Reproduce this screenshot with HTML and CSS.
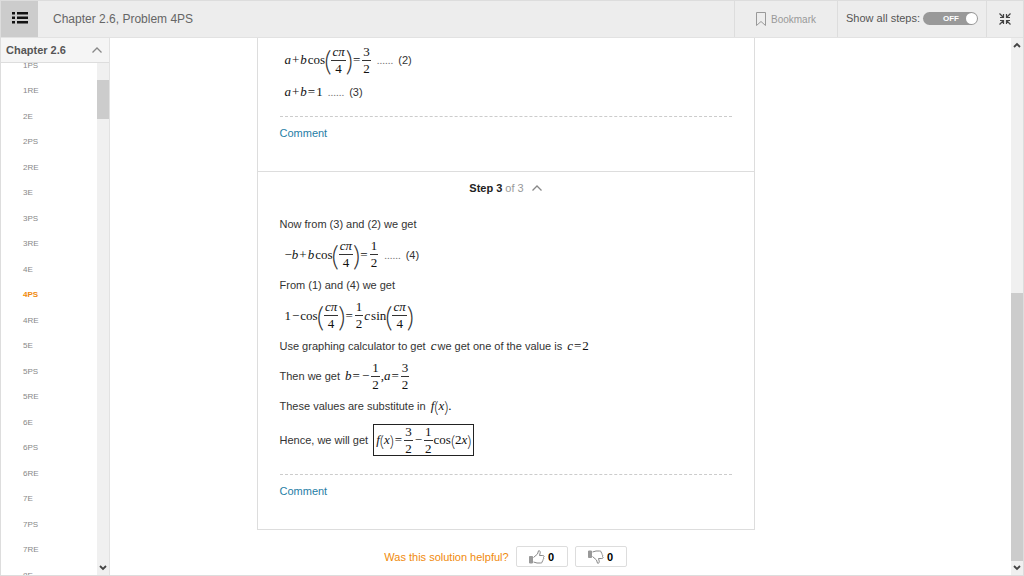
FILE: index.html
```html
<!DOCTYPE html>
<html lang="en">
<head>
    <meta charset="UTF-8">
    <meta name="viewport" content="width=device-width, initial-scale=1.0">
    <title>Chapter 2.6, Problem 4PS</title>
    <link rel="stylesheet" href="styles.css">
</head>
<body>
    <div class="page">
        <header class="topbar">
            <button type="button" class="menu-button" aria-label="Contents">
                <svg width="16" height="14" viewBox="0 0 16 14" fill="#111">
                    <path d="M0 1h3v2.500H0zM5 1h11v2.500H5zM0 5.500h3V8H0zM5 5.500h11V8H5zM0 10h3v2.500H0zM5 10h11v2.500H5z"/>
                </svg>
            </button>
            <h1 class="title">Chapter 2.6, Problem 4PS</h1>
            <button type="button" class="bookmark">
                <svg width="12" height="16" viewBox="0 0 12 16" fill="none" stroke="#999">
                    <path d="M1.500 1.500h9v13L6 10.500l-4.500 4z"/>
                </svg>
                Bookmark
            </button>
            <div class="show-steps">
                <label for="steps">Show all steps:</label>
                <span class="toggle">
                    <input type="checkbox" id="steps">
                    <span class="toggle-text">OFF</span>
                </span>
            </div>
            <button type="button" class="shrink-button" aria-label="Exit full screen">
                <svg width="12" height="12" viewBox="0 0 12 12" fill="none" stroke="#444" stroke-width="1.200">
                    <path d="M.5.5l4 4M4.500 1v3.500H1M11.500.5l-4 4M7.500 1v3.500H11M.5 11.500l4-4M4.500 11V7.500H1M11.500 11.500l-4-4M7.500 11V7.500H11"/>
                </svg>
            </button>
        </header>

        <div class="content">
            <nav class="sidebar">
                <button type="button" class="chapter">
                    Chapter 2.6
                    <svg width="10" height="6" viewBox="0 0 10 6" fill="none" stroke="#888" stroke-width="1.300"><path d="M.5 5.500L5 1l4.500 4.500"/></svg>
                </button>
                <div class="sidebar-body">
                    <ul class="problem-list">
                        <li><a href="#">1PS</a></li>
                        <li><a href="#">1RE</a></li>
                        <li><a href="#">2E</a></li>
                        <li><a href="#">2PS</a></li>
                        <li><a href="#">2RE</a></li>
                        <li><a href="#">3E</a></li>
                        <li><a href="#">3PS</a></li>
                        <li><a href="#">3RE</a></li>
                        <li><a href="#">4E</a></li>
                        <li><a href="#" class="active">4PS</a></li>
                        <li><a href="#">4RE</a></li>
                        <li><a href="#">5E</a></li>
                        <li><a href="#">5PS</a></li>
                        <li><a href="#">5RE</a></li>
                        <li><a href="#">6E</a></li>
                        <li><a href="#">6PS</a></li>
                        <li><a href="#">6RE</a></li>
                        <li><a href="#">7E</a></li>
                        <li><a href="#">7PS</a></li>
                        <li><a href="#">7RE</a></li>
                        <li><a href="#">8E</a></li>
                    </ul>
                    <div class="scrollbar list-scroll">
                        <div class="thumb"></div>
                        <svg class="arrow" width="8" height="6" viewBox="0 0 8 6" fill="none" stroke="#444" stroke-width="1.800"><path d="M1 1l3 3 3-3"/></svg>
                    </div>
                </div>
            </nav>

            <main class="main">
                <div class="solution">
                    <section class="step">
                        <div class="row eq first">
                            <span class="math"><i>a</i><span class="op">+</span><i>b</i><span class="fn">cos</span><span class="paren">(</span><span class="frac"><span><i>cπ</i></span><span>4</span></span><span class="paren">)</span><span class="op">=</span><span class="frac"><span>3</span><span>2</span></span></span>
                            <span class="dots">......</span>
                            <span>(2)</span>
                        </div>
                        <div class="row eq">
                            <span class="math"><i>a</i><span class="op">+</span><i>b</i><span class="op">=</span>1</span>
                            <span class="dots">......</span>
                            <span>(3)</span>
                        </div>
                        <div class="comment"><a href="#">Comment</a></div>
                    </section>

                    <section class="step">
                        <h2 class="step-title">
                            <b>Step 3</b> of 3
                            <svg width="10" height="6" viewBox="0 0 10 6" fill="none" stroke="#888" stroke-width="1.300"><path d="M.5 5.500L5 1l4.500 4.500"/></svg>
                        </h2>
                        <div class="row">Now from (3) and (2) we get</div>
                        <div class="row eq">
                            <span class="math">−<i>b</i><span class="op">+</span><i>b</i><span class="fn">cos</span><span class="paren">(</span><span class="frac"><span><i>cπ</i></span><span>4</span></span><span class="paren">)</span><span class="op">=</span><span class="frac"><span>1</span><span>2</span></span></span>
                            <span class="dots">......</span>
                            <span>(4)</span>
                        </div>
                        <div class="row">From (1) and (4) we get</div>
                        <div class="row eq">
                            <span class="math">1<span class="op">−</span>cos<span class="paren">(</span><span class="frac"><span><i>cπ</i></span><span>4</span></span><span class="paren">)</span><span class="op">=</span><span class="frac"><span>1</span><span>2</span></span><i>c</i><span class="fn">sin</span><span class="paren">(</span><span class="frac"><span><i>cπ</i></span><span>4</span></span><span class="paren">)</span></span>
                        </div>
                        <div class="row">
                            <span>Use graphing calculator to get</span>
                            <span class="math"><i>c</i></span>
                            <span class="tight">we get one of the value is</span>
                            <span class="math"><i>c</i><span class="op">=</span>2</span>
                        </div>
                        <div class="row">
                            <span>Then we get</span>
                            <span class="math"><i>b</i><span class="op">=</span><span class="op">−</span><span class="frac"><span>1</span><span>2</span></span>,<i>a</i><span class="op">=</span><span class="frac"><span>3</span><span>2</span></span></span>
                        </div>
                        <div class="row">
                            <span>These values are substitute in</span>
                            <span class="math"><i>f</i><span class="small-paren">(</span><i>x</i><span class="small-paren">)</span>.</span>
                        </div>
                        <div class="row answer">
                            <span>Hence, we will get</span>
                            <span class="math boxed"><i>f</i><span class="small-paren">(</span><i>x</i><span class="small-paren">)</span><span class="op">=</span><span class="frac"><span>3</span><span>2</span></span><span class="op">−</span><span class="frac"><span>1</span><span>2</span></span>cos<span class="small-paren">(</span>2<i>x</i><span class="small-paren">)</span></span>
                        </div>
                        <div class="comment last"><a href="#">Comment</a></div>
                    </section>
                </div>

                <div class="helpful">
                    <span>Was this solution helpful?</span>
                    <button type="button" class="vote" aria-label="Helpful, 0">
                        <svg width="16" height="14" viewBox="0 0 16 14" fill="none" stroke="#888">
                            <path d="M.5 6.500h3v6.500h-3z" fill="#999" stroke="#999"/>
                            <path d="M4.500 7.500L8.500 4 9.500.8c1.500-.2 2 .7 1.700 2L10.500 5.500h3.300c1.500 0 1.700 1.500.7 2 .5.700.2 1.500-.5 1.800.3.800 0 1.400-.7 1.700.2 1.500-.5 2-1.800 2H8l-3.500-1"/>
                        </svg>
                        0
                    </button>
                    <button type="button" class="vote" aria-label="Not helpful, 0">
                        <svg width="16" height="14" viewBox="0 0 16 14" fill="none" stroke="#888">
                            <path d="M.5 1h3v6.500h-3z" fill="#999" stroke="#999"/>
                            <path d="M4.500 6.500L8.500 10l1 3.200c1.500.2 2-.7 1.700-2L10.500 8.500h3.300c1.500 0 1.700-1.500.7-2 .5-.7.2-1.500-.5-1.800.3-.8 0-1.400-.7-1.700.2-1.500-.5-2-1.800-2H8L4.500 2"/>
                        </svg>
                        0
                    </button>
                </div>
            </main>

            <div class="scrollbar page-scroll">
                <svg class="arrow" width="8" height="6" viewBox="0 0 8 6" fill="none" stroke="#444" stroke-width="1.800"><path d="M1 5l3-3 3 3"/></svg>
                <div class="thumb"></div>
                <svg class="arrow" width="8" height="6" viewBox="0 0 8 6" fill="none" stroke="#444" stroke-width="1.800"><path d="M1 1l3 3 3-3"/></svg>
            </div>
        </div>
    </div>
</body>
</html>
```
FILE: styles.css
```css
* {
    box-sizing: border-box;
}
body {
    margin: 0;
    font-family: "Liberation Sans", Arial, sans-serif;
    font-size: 11px;
    color: #333;
    background-color: #fff;
}
button {
    font-family: inherit;
    border: none;
    padding: 0;
    cursor: pointer;
}
a {
    text-decoration: none;
}
.page {
    display: flex;
    flex-direction: column;
    height: 100vh;
    border: 1px solid #ddd;
    overflow: hidden;
}

/* top bar */
.topbar {
    display: flex;
    flex: none;
    height: 37px;
    background-color: #ededed;
    border-bottom: 1px solid #e2e2e2;
}
.menu-button {
    width: 37px;
    background-color: #ccc;
}
.title {
    flex: 1;
    margin: 0;
    padding-left: 15px;
    font-size: 12px;
    font-weight: normal;
    line-height: 37px;
    color: #666;
}
.bookmark {
    display: flex;
    align-items: center;
    gap: 4px;
    width: 103px;
    padding-left: 20px;
    font-size: 10px;
    color: #999;
    background: none;
    border-left: 1px solid #ddd;
}
.show-steps {
    display: flex;
    align-items: center;
    justify-content: space-between;
    width: 149px;
    padding: 0 8px 2px;
    color: #555;
    border-left: 1px solid #ddd;
}
.toggle {
    position: relative;
    display: flex;
}
.toggle input {
    appearance: none;
    display: flex;
    justify-content: flex-end;
    width: 55px;
    height: 13px;
    margin: 0;
    padding: 1px;
    border-radius: 7px;
    background-color: #999;
}
.toggle input::after {
    content: "";
    width: 11px;
    height: 11px;
    border-radius: 50%;
    background-color: #fff;
}
.toggle-text {
    position: absolute;
    left: 20px;
    top: 0;
    font-size: 8px;
    font-weight: bold;
    line-height: 13px;
    color: #fff;
    pointer-events: none;
}
.shrink-button {
    width: 37px;
    padding-top: 2px;
    background: none;
    border-left: 1px solid #ddd;
}

.content {
    display: flex;
    flex: 1;
    min-height: 0;
}

/* sidebar */
.sidebar {
    display: flex;
    flex-direction: column;
    width: 109px;
    border-right: 1px solid #e2e2e2;
}
.chapter {
    display: flex;
    align-items: center;
    justify-content: space-between;
    flex: none;
    height: 25px;
    padding: 0 7px 0 5px;
    font-size: 11px;
    font-weight: bold;
    color: #555;
    background-color: #f5f5f5;
    border-bottom: 1px solid #ddd;
}
.sidebar-body {
    display: flex;
    flex: 1;
    min-height: 0;
}
.problem-list {
    flex: 1;
    margin: -10px 0 0;
    padding: 0;
    list-style: none;
    overflow: hidden;
    clip-path: inset(10px 0 0);
}
.problem-list li {
    height: 25px;
    padding-left: 22px;
    line-height: 25px;
    font-size: 8px;
}
.problem-list li:nth-child(even) {
    height: 26px;
}
.problem-list a {
    color: #888;
}
.problem-list .active {
    font-weight: bold;
    color: #f08a0c;
}

/* scrollbars */
.scrollbar {
    display: flex;
    flex: none;
    flex-direction: column;
    align-items: center;
    width: 12px;
    background-color: #f0f0f0;
}
.thumb {
    width: 100%;
    background-color: #ccc;
}
.arrow {
    flex: none;
    margin: 4px 0;
}
.list-scroll {
    justify-content: space-between;
    padding-top: 17px;
}
.list-scroll .thumb {
    height: 39px;
}
.page-scroll .thumb {
    flex: 1;
    margin-top: 241px;
}

/* solution */
.main {
    flex: 1;
    padding-right: 110px;
}
.solution {
    max-width: 498px;
    margin: 0 auto;
    border: 1px solid #ddd;
    border-top: none;
}
.step {
    padding: 0 22px 30px;
}
.step + .step {
    border-top: 1px solid #ddd;
}
.step-title {
    display: flex;
    align-items: center;
    justify-content: center;
    gap: 3px;
    height: 31px;
    margin: 0 0 6px;
    font-size: 11px;
    font-weight: normal;
    color: #999;
}
.step-title b {
    color: #222;
}
.step-title svg {
    margin-left: 5px;
}
.row {
    display: flex;
    align-items: center;
    gap: 5px;
    height: 30px;
    white-space: nowrap;
}
.eq {
    height: 31px;
    padding-left: 5px;
}
.first {
    height: 38px;
    padding-top: 6px;
}
.answer {
    height: 38px;
}
.tight {
    margin-left: -4px;
}
.dots {
    font-family: "Liberation Serif", serif;
    color: #777;
}
.comment {
    margin-top: 9px;
    padding-top: 9px;
    line-height: 15px;
    border-top: 1px dashed #ccc;
}
.last {
    margin-top: 15px;
}
.comment a {
    color: #1f7ea6;
}

/* formulas */
.math {
    display: flex;
    align-items: center;
    font-family: "Liberation Serif", "Times New Roman", serif;
    font-size: 13px;
    color: #111;
}
.op {
    margin: 0 1px;
}
.fn {
    margin-left: 1px;
}
.frac {
    display: flex;
    flex-direction: column;
    margin: 0 1px;
    text-align: center;
    line-height: 16px;
}
.frac > span {
    padding: 0 1px;
}
.frac > span + span {
    border-top: 1px solid #333;
}
.paren {
    margin: 0 -1px;
    font-family: Lato, sans-serif;
    font-size: 28px;
    font-weight: 300;
    line-height: 28px;
    color: #333;
}
.small-paren {
    font-family: Lato, sans-serif;
    font-size: 16px;
    font-weight: 300;
}
.boxed {
    height: 32px;
    padding: 0 2px;
    border: 1px solid #222;
}

/* feedback */
.helpful {
    display: flex;
    align-items: center;
    justify-content: center;
    gap: 7px;
    padding-top: 16px;
    color: #f08a0c;
}
.vote {
    display: flex;
    align-items: center;
    justify-content: center;
    gap: 3px;
    width: 52px;
    height: 21px;
    font-size: 11px;
    font-weight: bold;
    color: #000;
    background-color: #fff;
    border: 1px solid #ddd;
    border-radius: 2px;
}
```
